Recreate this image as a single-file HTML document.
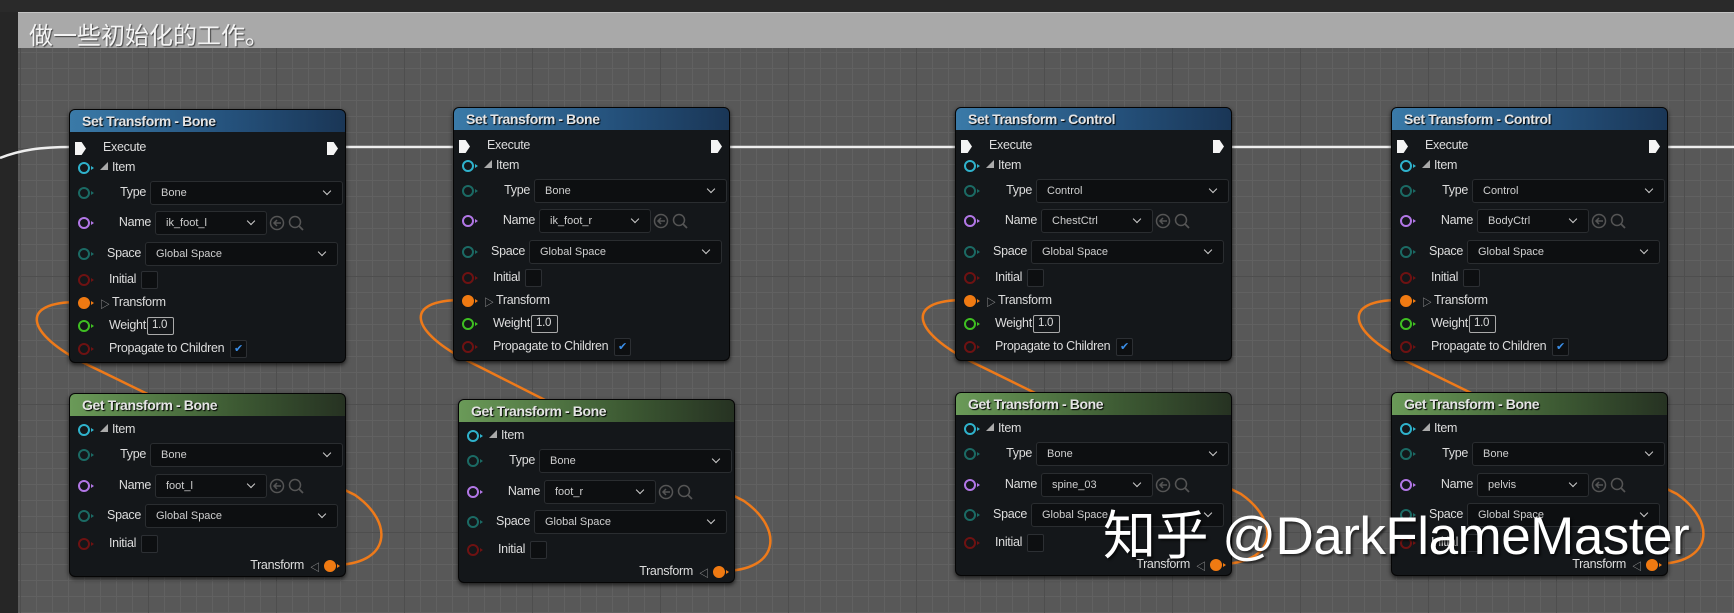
<!DOCTYPE html>
<html><head><meta charset="utf-8">
<style>
*{margin:0;padding:0;box-sizing:border-box}
body{width:1734px;height:613px;overflow:hidden;position:relative;font-family:"Liberation Sans","Noto Sans CJK SC",sans-serif;
background:#585858;
background-image:linear-gradient(#4e4e4e 1px,transparent 1px),linear-gradient(90deg,#4e4e4e 1px,transparent 1px),linear-gradient(#616161 1px,transparent 1px),linear-gradient(90deg,#616161 1px,transparent 1px);
background-size:128px 128px,128px 128px,16px 16px,16px 16px;background-position:0 20px,20px 0,0 4px,4px 0}
#left{position:absolute;left:0;top:0;width:18px;height:613px;background:#262626}
#top{position:absolute;left:0;top:0;width:1734px;height:12px;background:#2a2a2a}
#cm{position:absolute;left:18px;top:12px;width:1716px;height:36px;background:#a9a9a9;border-top:1px solid #c4c4c4}
#cm span{position:absolute;left:11px;top:3px;font-size:24px;color:#f4f4f4;text-shadow:1px 1px 1px #444}
svg.w{position:absolute;left:0;top:0}
.n{position:absolute;width:277px;background:#14171a;border-radius:6px;box-shadow:0 2px 4px rgba(0,0,0,.7);border:1px solid #050505;color:#ddd;font-size:12.5px;letter-spacing:-0.3px}
.h{height:22px;border-radius:5px 5px 0 0;font-weight:bold;font-size:14px;color:#e4e4e4;padding:3px 0 0 12px;text-shadow:1px 1px 1px #000;letter-spacing:-0.4px}
.hb{background:linear-gradient(90deg,#3a7aa8,#24507a 60%,#1a3656)}
.hg{background:linear-gradient(90deg,#6a9a58,#3d5a33 60%,#263222)}
.a{position:absolute;white-space:nowrap}
.dd{position:absolute;height:24px;background:#0d0f11;border:1px solid #2a2d30;border-radius:3px;font-size:11px;color:#cfcfcf;padding:5px 0 0 10px;letter-spacing:0}
.dd:after{content:"";position:absolute;right:12px;top:6px;width:5px;height:5px;border-right:1.5px solid #ccc;border-bottom:1.5px solid #ccc;transform:rotate(45deg)}
.cb{position:absolute;width:17px;height:18px;background:#0d0f11;border:1px solid #2c2f33;border-radius:2px}
.pin{position:absolute;width:12px;height:12px;border-radius:50%;border:2.5px solid}
.pin:after{content:"";position:absolute;right:-6px;top:2px;border-left:3px solid;border-top:2.5px solid transparent;border-bottom:2.5px solid transparent;border-left-color:inherit}
.ex{position:absolute;width:11px;height:13px;background:#f4f4f4;clip-path:polygon(0 0,60% 0,100% 50%,60% 100%,0 100%)}
.tri{position:absolute;font-size:8px;color:#aaa}
svg.ic{position:absolute}
#wm{position:absolute;left:1103px;top:510px;font-size:53px;color:#fff;text-shadow:2px 2px 2px rgba(0,0,0,.6);letter-spacing:-.5px;line-height:1}
</style></head><body>
<div id="left"></div><div id="top"></div>
<div id="cm"><span>做一些初始化的工作。</span></div>
<svg class="w" width="1734" height="613" id="sv"></svg>
<div id="nodes"></div>
<div id="wm">知乎 @DarkFlameMaster</div>
<script>
var N=[
 {x:69,y:109,ctl:0,name:"ik_foot_l",gx:69,gy:393,gname:"foot_l"},
 {x:453,y:107,ctl:0,name:"ik_foot_r",gx:458,gy:399,gname:"foot_r"},
 {x:955,y:107,ctl:1,name:"ChestCtrl",gx:955,gy:392,gname:"spine_03"},
 {x:1391,y:107,ctl:1,name:"BodyCtrl",gx:1391,gy:392,gname:"pelvis"}];
var C={item:"#2fb2cc",type:"#1b6a64",name:"#b277e6",red:"#6e1212",or:"#f07a12",gr:"#3fbf22"};
function pin(x,y,c,fill){return '<div class="pin" style="left:'+x+'px;top:'+(y-6)+'px;border-color:'+c+';'+(fill?'background:'+c:'')+'"></div>'}
function lab(x,y,t,right){return '<div class="a" style="'+(right?'right:'+(277-x):'left:'+x)+'px;top:'+(y-8)+'px">'+t+'</div>'}
function dd(x,y,w,t){return '<div class="dd" style="left:'+x+'px;top:'+(y-12)+'px;width:'+w+'px">'+t+'</div>'}
function icons(x,y){return '<svg class="ic" style="left:'+x+'px;top:'+(y-9)+'px" width="36" height="18" viewBox="0 0 36 18"><circle cx="8" cy="9" r="6.5" stroke="#555" stroke-width="1.5" fill="none"/><path d="M12 9H5M8 6L5 9L8 12" stroke="#555" stroke-width="1.5" fill="none"/><circle cx="26" cy="8" r="5.5" stroke="#555" stroke-width="1.5" fill="none"/><path d="M30 12L34 16" stroke="#555" stroke-width="1.8"/></svg>'}
function rowsItem(o,nm,tp){
 var h='';var i=o.item;
 h+=pin(8,i,C.item)+'<div class="tri" style="left:30px;top:'+(i-7)+'px">◢</div>'+lab(42,i,"Item");
 h+=pin(8,o.type,C.type)+lab(78,o.type,"Type",1)+dd(80,o.type,193,tp);
 h+=pin(8,o.name,C.name)+lab(83,o.name,"Name",1)+dd(85,o.name,112,nm)+icons(199,o.name);
 h+=pin(8,o.sp,C.type)+lab(73,o.sp,"Space",1)+dd(75,o.sp,193,"Global Space");
 h+=pin(8,o.ini,C.red)+lab(39,o.ini,"Initial")+'<div class="cb" style="left:71px;top:'+(o.ini-9)+'px"></div>';
 return h;}
var out='',svg='';
N.forEach(function(n){
 var h='<div class="h hb">Set Transform - '+(n.ctl?'Control':'Bone')+'</div>';
 h+='<div class="ex" style="left:5px;top:32px"></div>'+lab(33,38,"Execute")+'<div class="ex" style="left:257px;top:32px"></div>';
 h+=rowsItem({item:58,type:83,name:113,sp:144,ini:170},n.name,n.ctl?"Control":"Bone");
 h+=pin(8,193,C.or,1)+'<div class="tri" style="left:30px;top:186px;font-size:10px">▷</div>'+lab(42,193,"Transform");
 h+=pin(8,216,C.gr)+lab(39,216,"Weight")+'<div class="a" style="left:77px;top:207px;width:27px;height:18px;border:1px solid #aaa;border-radius:2px;font-size:11.5px;padding:1px 0 0 4px">1.0</div>';
 h+=pin(8,239,C.red)+lab(39,239,"Propagate to Children")+'<div class="cb" style="left:160px;top:230px;color:#3a8ee8;font-size:11px;text-align:center;line-height:16px">✔</div>';
 out+='<div class="n" style="left:'+n.x+'px;top:'+n.y+'px;height:254px">'+h+'</div>';
 var g='<div class="h hg">Get Transform - Bone</div>';
 g+=rowsItem({item:36,type:61,name:92,sp:122,ini:150},n.gname,"Bone");
 g+=lab(236,172,"Transform",1)+'<div class="tri" style="left:240px;top:165px;font-size:10px">◁</div>'+'<div class="pin" style="left:254px;top:166px;border-color:#f07a12;background:#f07a12"></div>';
 out+='<div class="n" style="left:'+n.gx+'px;top:'+n.gy+'px;height:184px">'+g+'</div>';
 var ix=n.x+9,iy=n.y+193,ox=n.gx+264,oy=n.gy+172;
 svg+='<path d="M'+ix+' '+iy+' C'+(ix-60)+' '+iy+' '+(ix-52)+' '+(iy+32)+' '+(ix+8)+' '+(iy+62)+' L'+(ox+22)+' '+(oy-70)+' C'+(ox+62)+' '+(oy-42)+' '+(ox+58)+' '+oy+' '+ox+' '+oy+'" stroke="#ee7a1a" stroke-width="2.5" fill="none"/>';
});
svg+='<path d="M0 158 C20 150 40 147 72 147 M345 147 L455 147 M728 147 L958 147 M1230 147 L1393 147 M1666 147 L1734 147" stroke="#eee" stroke-width="2.5" fill="none"/>';
document.getElementById('nodes').innerHTML=out;
document.getElementById('sv').innerHTML=svg;
</script>
</body></html>
